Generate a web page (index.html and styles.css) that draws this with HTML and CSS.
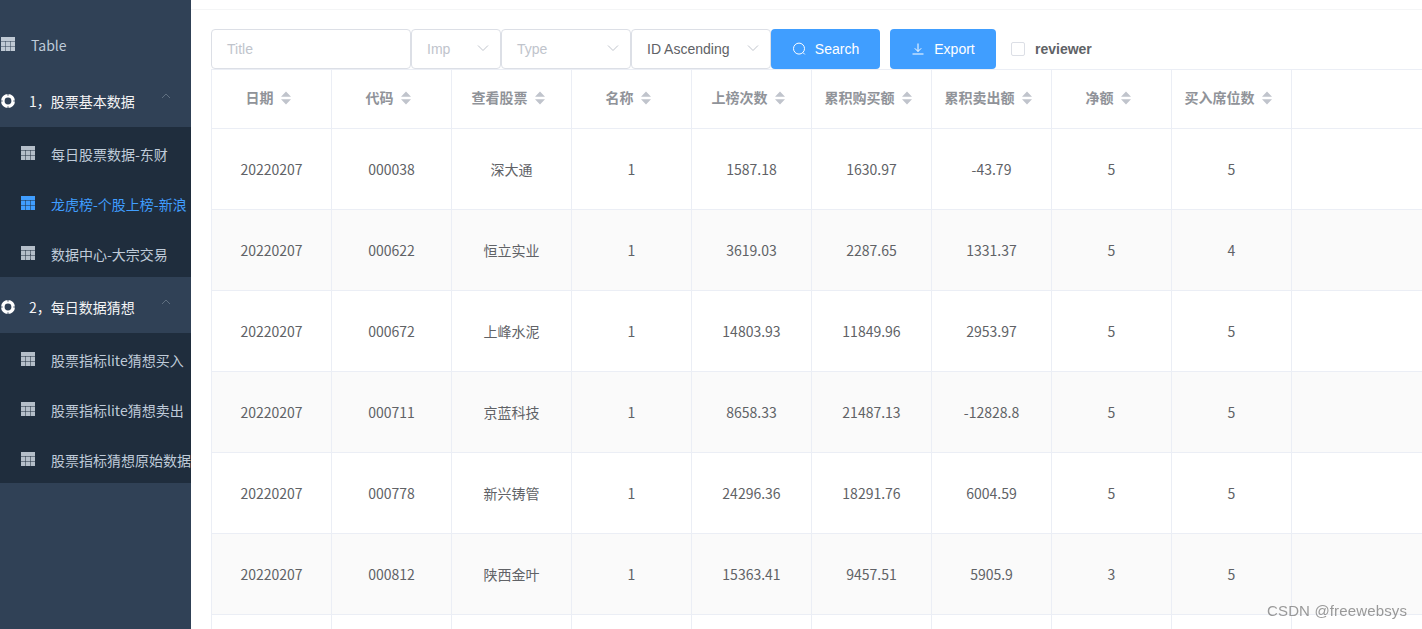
FILE: index.html
```html
<!DOCTYPE html>
<html lang="zh">
<head>
<meta charset="utf-8">
<title>Table</title>
<link rel="stylesheet" href="styles.css">
</head>
<body>
<svg class="defs" width="0" height="0">
  <symbol id="i-table" viewBox="0 0 14 14">
    <path fill="currentColor" d="M0 0h14v4H0zM0 4.5h4.25V9.1H0zM4.75 4.5h4.5V9.1h-4.5zM9.75 4.5H14V9.1H9.75zM0 9.6h4.25V14H0zM4.75 9.6h4.5V14h-4.5zM9.75 9.6H14V14H9.75z"/>
  </symbol>
  <symbol id="i-ring" viewBox="0 0 14 14">
    <path fill="currentColor" fill-rule="evenodd" d="M7 0a7 7 0 1 0 0 14A7 7 0 0 0 7 0zm0 3.6a3.4 3.4 0 1 1 0 6.8 3.4 3.4 0 0 1 0-6.8z"/>
    <path stroke="#304156" stroke-width="1" d="M7 0v1.6M7 12.4V14M0 7h1.6M12.4 7H14"/>
  </symbol>
  <symbol id="i-sort" viewBox="0 0 10 14">
    <path fill="currentColor" d="M5 .5l5 5.2H0zM5 13.5L0 8.3h10z"/>
  </symbol>
  <symbol id="i-down" viewBox="0 0 12 8">
    <path fill="none" stroke="currentColor" stroke-width="1" d="M1 1.5l5 5 5-5"/>
  </symbol>
  <symbol id="i-up" viewBox="0 0 12 8">
    <path fill="none" stroke="currentColor" stroke-width="1" d="M2 6l4-4 4 4"/>
  </symbol>
</svg>
<div class="app">
  <aside class="sidebar">
    <a class="menu-item"><svg class="ico"><use href="#i-table"/></svg><span class="label-top">Table</span></a>
    <a class="menu-item group"><svg class="ico"><use href="#i-ring"/></svg><span class="label-group">1，股票基本数据</span><svg class="arrow"><use href="#i-up"/></svg></a>
    <div class="submenu">
      <a class="sub-item"><svg class="ico"><use href="#i-table"/></svg><span>每日股票数据-东财</span></a>
      <a class="sub-item active"><svg class="ico"><use href="#i-table"/></svg><span>龙虎榜-个股上榜-新浪</span></a>
      <a class="sub-item"><svg class="ico"><use href="#i-table"/></svg><span>数据中心-大宗交易</span></a>
    </div>
    <a class="menu-item group"><svg class="ico"><use href="#i-ring"/></svg><span class="label-group">2，每日数据猜想</span><svg class="arrow"><use href="#i-up"/></svg></a>
    <div class="submenu">
      <a class="sub-item"><svg class="ico"><use href="#i-table"/></svg><span>股票指标lite猜想买入</span></a>
      <a class="sub-item"><svg class="ico"><use href="#i-table"/></svg><span>股票指标lite猜想卖出</span></a>
      <a class="sub-item"><svg class="ico"><use href="#i-table"/></svg><span>股票指标猜想原始数据</span></a>
    </div>
  </aside>
  <main class="main">
    <div class="navbar"></div>
    <div class="content">
      <form class="toolbar">
        <div class="field w-title"><span class="placeholder">Title</span></div>
        <div class="field w-imp"><span class="placeholder">Imp</span><svg class="caret"><use href="#i-down"/></svg></div>
        <div class="field w-type"><span class="placeholder">Type</span><svg class="caret"><use href="#i-down"/></svg></div>
        <div class="field w-sort"><span class="value">ID Ascending</span><svg class="caret"><use href="#i-down"/></svg></div>
        <button class="btn btn-search" type="button">
          <svg class="btn-ico" viewBox="0 0 14 14"><circle cx="7" cy="6.6" r="5.5" fill="none" stroke="currentColor" stroke-width="1"/><path d="M11 10.6l1.8 1.8" stroke="currentColor" stroke-width="1"/></svg>
          <span>Search</span>
        </button>
        <button class="btn btn-export" type="button">
          <svg class="btn-ico" viewBox="0 0 14 14"><path d="M7 1.5v8M3.8 6.3L7 9.5l3.2-3.2M1.5 12h11" fill="none" stroke="currentColor" stroke-width="1"/></svg>
          <span>Export</span>
        </button>
        <label class="check"><span class="box"></span><span class="check-label">reviewer</span></label>
      </form>
      <div class="table-wrap">
        <table class="grid">
          <colgroup><col class="c"><col class="c"><col class="c"><col class="c"><col class="c"><col class="c"><col class="c"><col class="c"><col class="c"><col></colgroup>
          <thead>
            <tr>
              <th>日期<svg class="sort"><use href="#i-sort"/></svg></th>
              <th>代码<svg class="sort"><use href="#i-sort"/></svg></th>
              <th>查看股票<svg class="sort"><use href="#i-sort"/></svg></th>
              <th>名称<svg class="sort"><use href="#i-sort"/></svg></th>
              <th>上榜次数<svg class="sort"><use href="#i-sort"/></svg></th>
              <th>累积购买额<svg class="sort"><use href="#i-sort"/></svg></th>
              <th>累积卖出额<svg class="sort"><use href="#i-sort"/></svg></th>
              <th>净额<svg class="sort"><use href="#i-sort"/></svg></th>
              <th>买入席位数<svg class="sort"><use href="#i-sort"/></svg></th>
              <th></th>
            </tr>
          </thead>
          <tbody>
            <tr><td>20220207</td><td>000038</td><td>深大通</td><td>1</td><td>1587.18</td><td>1630.97</td><td>-43.79</td><td>5</td><td>5</td><td></td></tr>
            <tr><td>20220207</td><td>000622</td><td>恒立实业</td><td>1</td><td>3619.03</td><td>2287.65</td><td>1331.37</td><td>5</td><td>4</td><td></td></tr>
            <tr><td>20220207</td><td>000672</td><td>上峰水泥</td><td>1</td><td>14803.93</td><td>11849.96</td><td>2953.97</td><td>5</td><td>5</td><td></td></tr>
            <tr><td>20220207</td><td>000711</td><td>京蓝科技</td><td>1</td><td>8658.33</td><td>21487.13</td><td>-12828.8</td><td>5</td><td>5</td><td></td></tr>
            <tr><td>20220207</td><td>000778</td><td>新兴铸管</td><td>1</td><td>24296.36</td><td>18291.76</td><td>6004.59</td><td>5</td><td>5</td><td></td></tr>
            <tr><td>20220207</td><td>000812</td><td>陕西金叶</td><td>1</td><td>15363.41</td><td>9457.51</td><td>5905.9</td><td>3</td><td>5</td><td></td></tr>
            <tr><td></td><td></td><td></td><td></td><td></td><td></td><td></td><td></td><td></td><td></td></tr>
          </tbody>
        </table>
      </div>
    </div>
  </main>
</div>
<div class="watermark">CSDN @freewebsys</div>
</body>
</html>
```
FILE: styles.css
```css
* { box-sizing: border-box; }
html, body { margin: 0; height: 100%; overflow: hidden; background: #fff; }
body { font-family: "Noto Sans CJK SC", "Noto Sans", sans-serif; font-size: 14px; color: #606266; }
.defs { position: absolute; }
.app { display: flex; height: 629px; overflow: hidden; }

.sidebar { width: 191px; flex: none; background: #304156; padding-top: 15px; overflow: hidden; }
.menu-item { display: flex; align-items: center; height: 56px; padding-left: 1px; color: #bfcbd9; white-space: nowrap; }
.menu-item.group { color: #f4f4f5; }
.label-top { margin-left: 16px; padding-top: 4px; }
.label-group { margin-left: 14px; padding-top: 4px; }
.ico { width: 14px; height: 14px; flex: none; margin-top: 2px; }
.menu-item .ico { color: #bfc9d4; }
.menu-item.group .ico { color: #fff; margin-top: 4px; }
.arrow { width: 12px; height: 8px; margin-left: 25px; margin-top: -6px; color: #5f6f80; flex: none; }
.submenu { background: #1f2d3d; }
.sub-item { display: flex; align-items: center; height: 50px; padding-left: 21px; color: #bfcbd9; white-space: nowrap; }
.sub-item span { margin-left: 16px; padding-top: 3px; }
.sub-item .ico { color: #b4bec9; }
.sub-item.active, .sub-item.active .ico { color: #409eff; }

.main { flex: 1; min-width: 0; display: flex; flex-direction: column; }
.navbar { height: 10px; flex: none; border-bottom: 1px solid #f4f5f6; }
.content { padding: 19px 0 0 20px; flex: 1; min-height: 0; }

.toolbar { display: flex; align-items: center; height: 40px; margin: 0; font-family: "Liberation Sans", Arial, sans-serif; }
.field { position: relative; display: flex; align-items: center; height: 40px; padding-left: 15px; background: #fff; border: 1px solid #dcdfe6; border-radius: 4px; flex: none; }
.w-title { width: 200px; }
.w-imp { width: 90px; }
.w-type { width: 130px; }
.w-sort { width: 140px; }
.placeholder { color: #c0c4cc; }
.value { color: #606266; }
.caret { position: absolute; right: 10px; top: 14px; width: 14px; height: 8px; color: #c0c4cc; }
.btn { display: flex; align-items: center; justify-content: center; height: 40px; border: 0; border-radius: 4px; background: #409eff; color: #fff; font: inherit; padding: 0; flex: none; }
.btn-search { width: 109px; }
.btn-export { width: 106px; margin-left: 10px; }
.btn-ico { width: 14px; height: 14px; margin-right: 9px; }
.check { display: flex; align-items: center; margin-left: 15px; }
.box { width: 14px; height: 14px; border: 1px solid #dcdfe6; border-radius: 2px; background: #fff; }
.check-label { margin-left: 10px; font-weight: 700; color: #606266; }

.table-wrap { border-left: 1px solid #ebeef5; border-top: 1px solid #ebeef5; }
.grid { border-collapse: separate; border-spacing: 0; table-layout: fixed; width: 100%; }
.c { width: 120px; }
.grid th, .grid td { text-align: center; border-right: 1px solid #ebeef5; border-bottom: 1px solid #ebeef5; padding: 0; }
.grid th { height: 59px; color: #909399; font-weight: 700; padding: 0 7px 4px 0; }
.grid td { height: 81px; }
.grid th:last-child, .grid td:last-child { border-right: 0; }
.grid tbody tr:nth-child(even) td { background: #fafafa; }
.sort { display: inline-block; width: 10px; height: 14px; margin-left: 7px; vertical-align: -2px; color: #c0c4cc; }

.watermark { position: fixed; left: 1267px; top: 602px; font-family: "Liberation Sans", Arial, sans-serif; font-size: 15px; letter-spacing: 0.15px; color: rgba(120, 120, 120, 0.75); white-space: nowrap; }
```
